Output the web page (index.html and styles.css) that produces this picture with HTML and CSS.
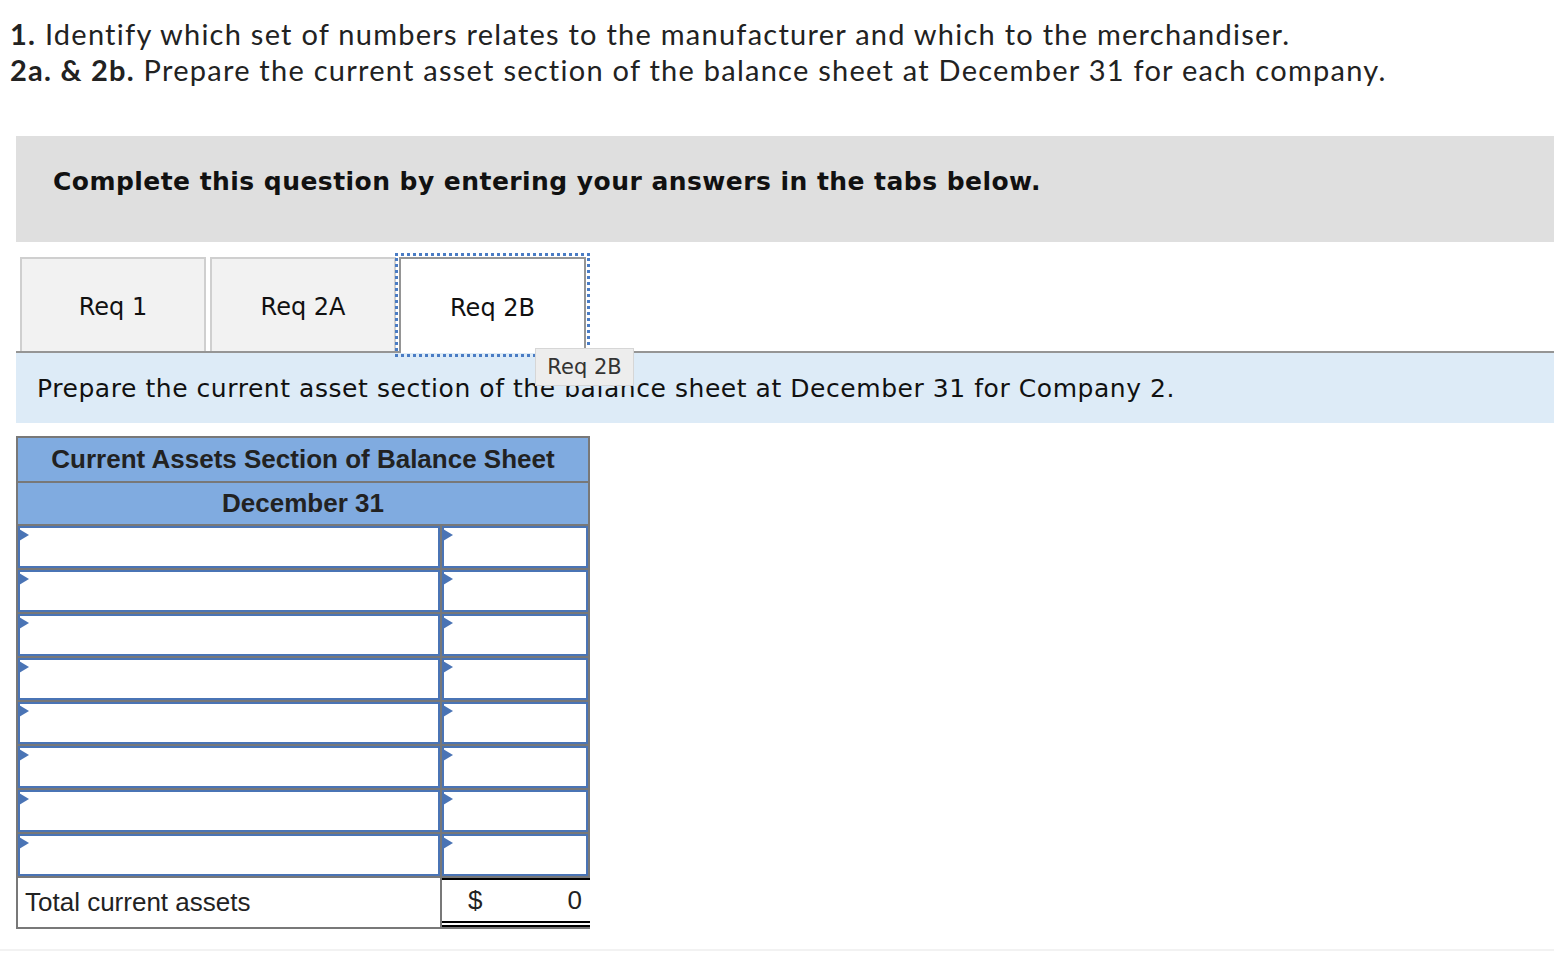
FILE: index.html
```html
<!DOCTYPE html>
<html>
<head>
<meta charset="utf-8">
<link rel="stylesheet" href="styles.css">
</head>
<body>
<div class="intro">
  <p class="line"><b>1.</b> Identify which set of numbers relates to the manufacturer and which to the merchandiser.</p>
  <p class="line"><b>2a. &amp; 2b.</b> Prepare the current asset section of the balance sheet at December 31 for each company.</p>
</div>
<div class="banner">Complete this question by entering your answers in the tabs below.</div>
<div class="tabs">
  <div class="tab">Req 1</div>
  <div class="tab">Req 2A</div>
  <div class="tab active">Req 2B</div>
  <div class="tooltip">Req 2B</div>
</div>
<div class="prompt">Prepare the current asset section of the balance sheet at December 31 for Company 2.</div>
<div class="sheet">
  <div class="head">Current Assets Section of Balance Sheet</div>
  <div class="head head2">December 31</div>
  <div class="cell"><div class="inp"></div></div><div class="cell"><div class="inp"></div></div>
  <div class="cell"><div class="inp"></div></div><div class="cell"><div class="inp"></div></div>
  <div class="cell"><div class="inp"></div></div><div class="cell"><div class="inp"></div></div>
  <div class="cell"><div class="inp"></div></div><div class="cell"><div class="inp"></div></div>
  <div class="cell"><div class="inp"></div></div><div class="cell"><div class="inp"></div></div>
  <div class="cell"><div class="inp"></div></div><div class="cell"><div class="inp"></div></div>
  <div class="cell"><div class="inp"></div></div><div class="cell"><div class="inp"></div></div>
  <div class="cell"><div class="inp"></div></div><div class="cell"><div class="inp"></div></div>
  <div class="total-label">Total current assets</div>
  <div class="total-val"><span>$</span><span>0</span></div>
</div>
<div class="footer-line"></div>
</body>
</html>
```
FILE: styles.css
```css
html, body {
  margin: 0;
  padding: 0;
  background: #fff;
}
body {
  font-family: "DejaVu Sans", Verdana, sans-serif;
  color: #111;
}
.intro {
  padding: 16px 0 0 10px;
  font-family: Lato, "Open Sans", sans-serif;
  font-size: 29px;
  letter-spacing: 1.25px;
  color: #222;
}
.line {
  margin: 0;
  line-height: 36px;
}
.line b {
  font-weight: 700;
}
.banner {
  margin: 48px 0 0 16px;
  height: 106px;
  background: #dfdfdf;
  box-sizing: border-box;
  padding: 0 0 16px 37px;
  display: flex;
  align-items: center;
  font-weight: bold;
  font-size: 25px;
  letter-spacing: 0.45px;
  color: #111;
}
.tabs {
  position: relative;
  margin: 15px 0 0 16px;
  padding-left: 4px;
  display: flex;
  gap: 4px;
  border-bottom: 2px solid #959595;
  height: 94px;
}
.tab {
  width: 186px;
  height: 94px;
  box-sizing: border-box;
  padding-top: 4px;
  background: #f2f2f2;
  border: 2px solid #cfcfcf;
  border-bottom: none;
  display: flex;
  align-items: center;
  justify-content: center;
  font-size: 24px;
  color: #111;
}
.tab.active {
  width: 187px;
  margin-left: -1px;
  background: #fff;
  border-color: #959595;
  outline: 3px dotted #4a7cc4;
  outline-offset: 1px;
  height: 96px;
}
.tooltip {
  position: absolute;
  left: 519px;
  top: 91px;
  width: 99px;
  height: 38px;
  box-sizing: border-box;
  background: #ededed;
  border: 1px solid #d6d6d6;
  font-size: 21px;
  color: #333;
  display: flex;
  align-items: center;
  justify-content: center;
  z-index: 2;
}
.prompt {
  margin-left: 16px;
  height: 70px;
  background: #ddebf7;
  box-sizing: border-box;
  padding-left: 21px;
  display: flex;
  align-items: center;
  font-size: 25px;
  letter-spacing: 0.55px;
  color: #111;
}
.sheet {
  margin: 13px 0 0 16px;
  width: 574px;
  box-sizing: border-box;
  border: 2px solid #787878;
  background: #787878;
  display: grid;
  grid-template-columns: 422px 146px;
  row-gap: 2px;
  column-gap: 2px;
  font-family: "Liberation Sans", Arial, sans-serif;
}
.head {
  grid-column: 1 / 3;
  background: #80abe0;
  height: 43px;
  display: flex;
  align-items: center;
  justify-content: center;
  font-weight: bold;
  font-size: 26px;
  color: #222;
}
.head2 {
  height: 41px;
}
.cell {
  background: #fff;
  height: 42px;
}
.inp {
  position: relative;
  height: 100%;
  box-sizing: border-box;
  border: 2px solid #4a74b5;
  background: #fff;
}
.inp::before {
  content: "";
  position: absolute;
  left: -1px;
  top: 1px;
  border-left: 10px solid #4a74b5;
  border-top: 6px solid transparent;
  border-bottom: 6px solid transparent;
}
.total-label {
  background: #fff;
  height: 49px;
  box-sizing: border-box;
  padding-left: 7px;
  display: flex;
  align-items: center;
  font-size: 26px;
  color: #222;
}
.total-val {
  background: #fff;
  height: 49px;
  box-sizing: border-box;
  border-top: 2px solid #000;
  border-bottom: 6px double #000;
  display: flex;
  align-items: center;
  justify-content: space-between;
  padding: 0 8px 0 26px;
  font-size: 26px;
  color: #222;
  margin-right: -2px;
  margin-bottom: -2px;
}
.footer-line {
  margin-top: 20px;
  height: 2px;
  background: #f2f2f2;
}
```
